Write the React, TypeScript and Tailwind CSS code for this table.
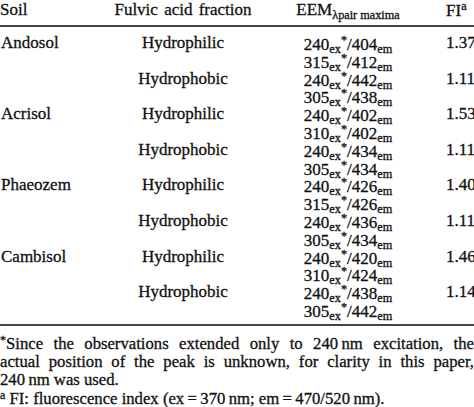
const rows = [
  { soil: 'Andosol', fraction: 'Hydrophilic', pairs: [['240', '404'], ['315', '412']], fi: '1.37' },
  { soil: '', fraction: 'Hydrophobic', pairs: [['240', '442'], ['305', '438']], fi: '1.11' },
  { soil: 'Acrisol', fraction: 'Hydrophilic', pairs: [['240', '402'], ['310', '402']], fi: '1.53' },
  { soil: '', fraction: 'Hydrophobic', pairs: [['240', '434'], ['305', '434']], fi: '1.11' },
  { soil: 'Phaeozem', fraction: 'Hydrophilic', pairs: [['240', '426'], ['315', '426']], fi: '1.40' },
  { soil: '', fraction: 'Hydrophobic', pairs: [['240', '436'], ['305', '434']], fi: '1.11' },
  { soil: 'Cambisol', fraction: 'Hydrophilic', pairs: [['240', '420'], ['310', '424']], fi: '1.46' },
  { soil: '', fraction: 'Hydrophobic', pairs: [['240', '438'], ['305', '442']], fi: '1.14' },
];

const Sub = ({ children }: { children: React.ReactNode }) => (
  <span className="text-[0.72em] leading-none align-[-0.3em]">{children}</span>
);

const Sup = ({ children }: { children: React.ReactNode }) => (
  <span className="text-[0.72em] leading-none align-[0.45em]">{children}</span>
);

const Pair = ({ ex, em }: { ex: string; em: string }) => (
  <div className="h-[17.8px] leading-[17.8px] whitespace-nowrap">
    {ex}
    <Sub>ex</Sub>
    <Sup>*</Sup>/{em}
    <Sub>em</Sub>
  </div>
);

export default function App() {
  return (
    <div className="w-[474px] h-[407px] overflow-hidden bg-white text-[#111] [-webkit-text-stroke:0.3px_#111] font-['Liberation_Serif',serif] text-[17px]">
      {/* header */}
      <div className="grid grid-cols-[110px_146px_184px_1fr] h-[26.5px] leading-[20px] border-b-2 border-[#444]">
        <div>Soil</div>
        <div className="text-center whitespace-nowrap [word-spacing:2px]">Fulvic acid fraction</div>
        <div className="text-center whitespace-nowrap">
          EEM<Sub>λpair maxima</Sub>
        </div>
        <div className="pl-[6px] whitespace-nowrap">
          FI<Sup>a</Sup>
        </div>
      </div>

      {/* body */}
      <div className="pt-[7.6px] pb-[5px] border-b-2 border-[#444]">
        {rows.map((row, i) => (
          <div key={i} className="grid grid-cols-[110px_146px_184px_1fr] h-[35.6px] leading-[17.8px]">
            <div className="pl-[1px]">{row.soil}</div>
            <div className="text-center">{row.fraction}</div>
            <div className="flex flex-col items-center">
              {row.pairs.map(([ex, em], j) => (
                <Pair key={j} ex={ex} em={em} />
              ))}
            </div>
            <div className="pl-[6px]">{row.fi}</div>
          </div>
        ))}
      </div>

      {/* footnotes */}
      <div className="mt-[8px] text-[16.7px] leading-[18px]">
        <div className="text-justify [text-align-last:justify] whitespace-nowrap">
          <Sup>*</Sup>Since the observations extended only to 240{'\u202F'}nm excitation, the
        </div>
        <div className="text-justify [text-align-last:justify] whitespace-nowrap">
          actual position of the peak is unknown, for clarity in this paper,
        </div>
        <div>240{'\u202F'}nm was used.</div>
        <div className="whitespace-nowrap">
          <Sup>a</Sup> FI: fluorescence index (ex{'\u2009'}={'\u2009'}370{'\u202F'}nm; em{'\u2009'}={'\u2009'}470/520{'\u202F'}nm).
        </div>
      </div>
    </div>
  );
}
